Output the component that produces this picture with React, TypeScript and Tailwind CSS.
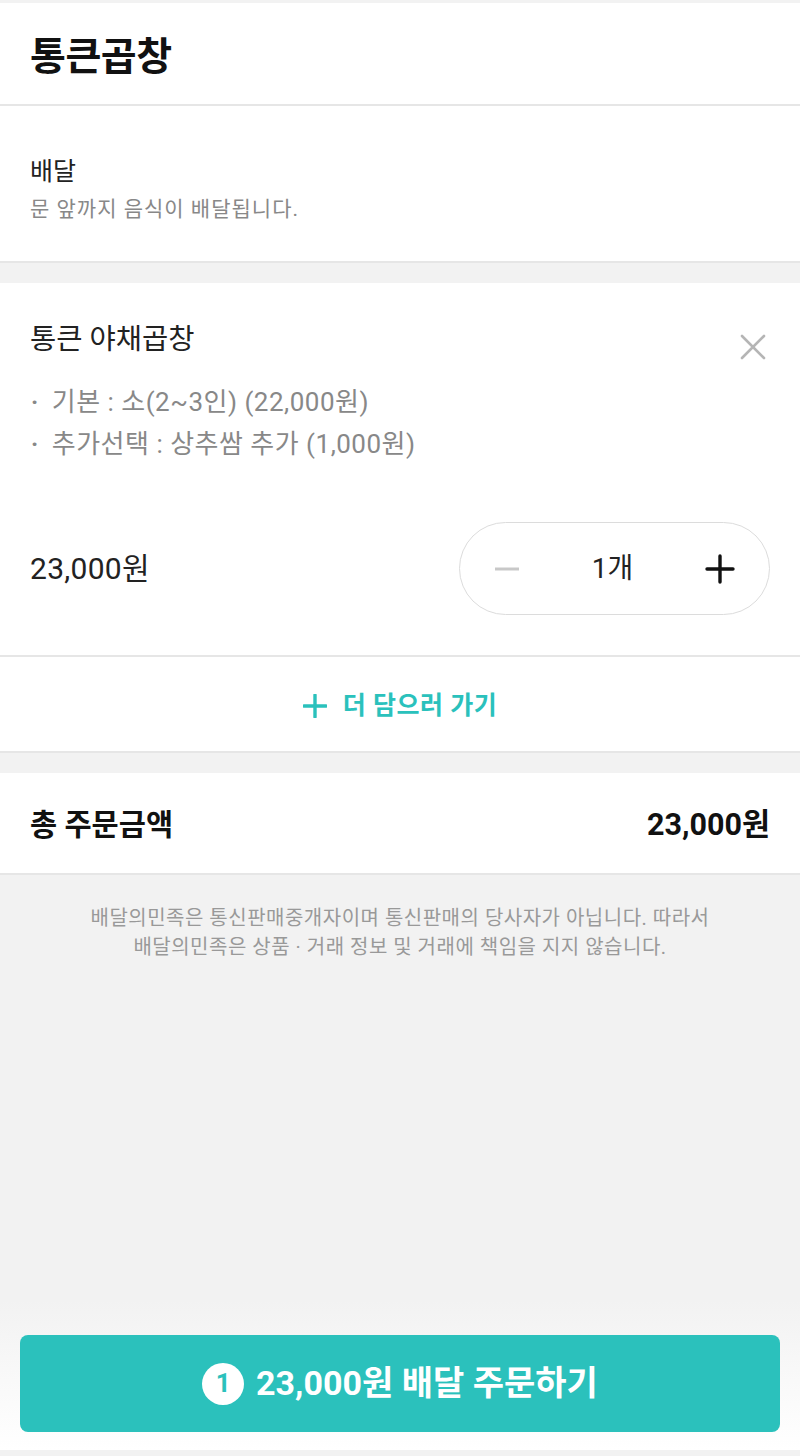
import React from "react";

const font = { fontFamily: "Roboto, 'Noto Sans CJK KR', sans-serif" };

export default function App() {
  return (
    <div className="flex min-h-[1456px] w-[800px] flex-col bg-[#f2f2f2]" style={font}>
      <div className="h-[3px] bg-[#f2f2f2]" />
      {/* Header */}
      <div className="flex h-[103px] items-center border-b-2 border-[#e6e6e6] bg-white px-[30px] pt-[7px]">
        <h1 className="text-[39px] font-bold leading-none tracking-[-0.5px] text-[#111]">통큰곱창</h1>
      </div>
      {/* Delivery */}
      <div className="flex h-[157px] flex-col justify-center border-b-2 border-[#e6e6e6] bg-white px-[30px] pt-[12px]">
        <div className="text-[25px] leading-[30px] text-[#222]">배달</div>
        <div className="mt-[9px] text-[21px] leading-[26px] tracking-[1px] text-[#888]">문 앞까지 음식이 배달됩니다.</div>
      </div>
      <div className="h-[20px]" />
      {/* Item */}
      <div className="border-b-2 border-[#e6e6e6] bg-white px-[30px] pb-[40px] pt-[38px]">
        <div className="flex items-start justify-between">
          <div className="text-[28.5px] leading-[38px] text-[#222]">통큰 야채곱창</div>
          <svg width="26" height="26" viewBox="0 0 26 26" className="mr-[4px] mt-[13px]">
            <path d="M2 2 L24 24 M24 2 L2 24" stroke="#b5b5b5" strokeWidth="2.6" strokeLinecap="round" />
          </svg>
        </div>
        <div className="mt-[24px] flex flex-col gap-[6px] text-[26px] leading-[36px] tracking-[0.5px] text-[#888]">
          <div className="flex items-center">
            <span className="mr-[13px] ml-[1px] text-[24px] font-bold">·</span>기본 : 소(2~3인) (22,000원)
          </div>
          <div className="flex items-center">
            <span className="mr-[13px] ml-[1px] text-[24px] font-bold">·</span>추가선택 : 상추쌈 추가 (1,000원)
          </div>
        </div>
        <div className="mt-[60px] flex items-center justify-between">
          <div className="text-[30px] tracking-[0.3px] text-[#222]">23,000원</div>
          <div className="flex h-[93px] w-[311px] items-center justify-between rounded-full border border-[#dcdcdc] px-[34px]">
            <svg width="26" height="26" viewBox="0 0 26 26">
              <path d="M1 13 H25" stroke="#c8c8c8" strokeWidth="3" />
            </svg>
            <span className="text-[28px] text-[#222]">1개</span>
            <svg width="30" height="30" viewBox="0 0 30 30">
              <path d="M2 15 H28 M15 2 V28" stroke="#111" strokeWidth="3.4" strokeLinecap="round" />
            </svg>
          </div>
        </div>
      </div>
      {/* Add more */}
      <div className="flex h-[96px] items-center justify-center gap-[16px] border-b-2 border-[#e6e6e6] bg-white pt-[4px]">
        <svg width="24" height="24" viewBox="0 0 24 24">
          <path d="M1 12 H23 M12 1 V23" stroke="#2ac1bc" strokeWidth="3.4" strokeLinecap="round" />
        </svg>
        <span className="text-[25px] font-bold tracking-[0.5px] text-[#2ac1bc]">더 담으러 가기</span>
      </div>
      <div className="h-[20px]" />
      {/* Total */}
      <div className="flex h-[102px] items-center justify-between border-b-2 border-[#e6e6e6] bg-white px-[30px] pt-[4px]">
        <span className="text-[29.5px] font-bold text-[#111]">총 주문금액</span>
        <span className="text-[30.5px] font-bold text-[#111]">23,000원</span>
      </div>
      {/* Disclaimer */}
      <div className="pt-[29px] text-center text-[20px] leading-[29px] tracking-[0.5px] text-[#999]">
        배달의민족은 통신판매중개자이며 통신판매의 당사자가 아닙니다. 따라서
        <br />
        배달의민족은 상품 · 거래 정보 및 거래에 책임을 지지 않습니다.
      </div>
      <div className="flex-1" />
      {/* Bottom button */}
      <div className="bg-gradient-to-b from-[#f2f2f2] to-white px-[20px] pb-[18px] pt-[35px]">
        <div className="flex h-[97px] items-center justify-center gap-[12px] rounded-[8px] bg-[#2bc1bc]">
          <span className="flex h-[42px] w-[42px] items-center justify-center rounded-full bg-white text-[26px] font-bold text-[#2bc1bc]">1</span>
          <span className="text-[34px] font-bold text-white">23,000원 배달 주문하기</span>
        </div>
      </div>
      <div className="h-[6px] bg-[#f2f2f2]" />
    </div>
  );
}
